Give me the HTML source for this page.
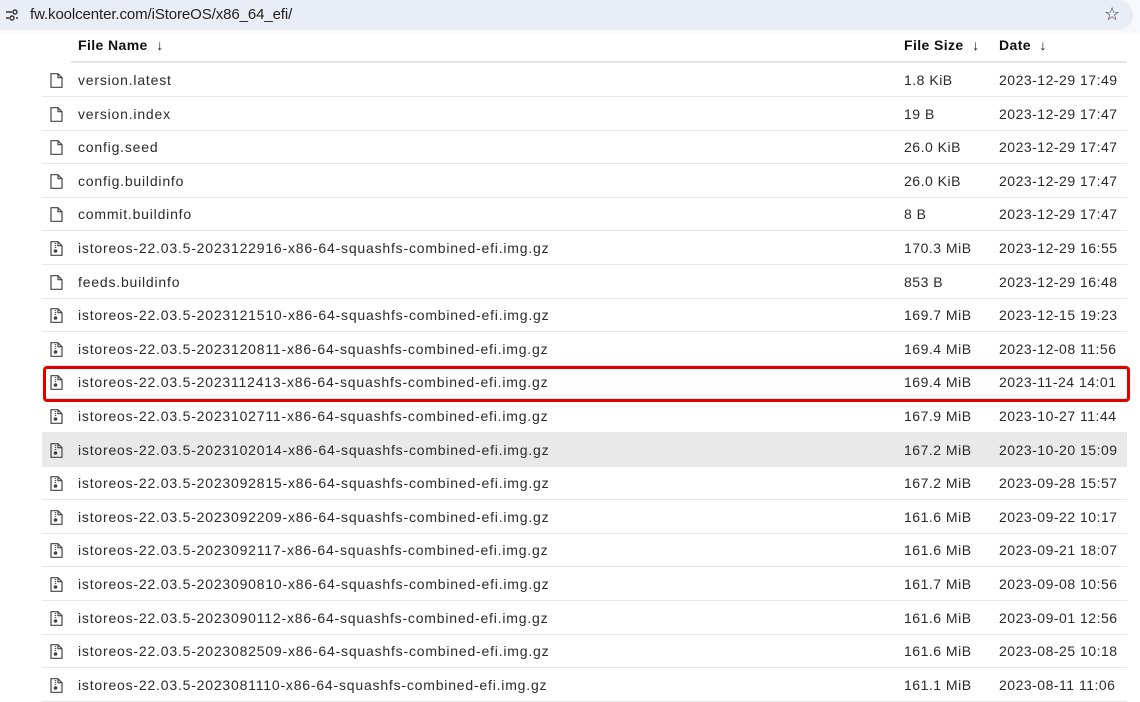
<!DOCTYPE html>
<html><head><meta charset="utf-8"><style>
*{margin:0;padding:0;box-sizing:border-box}
body{width:1140px;height:701px;overflow:hidden;background:#fff;font-family:"Liberation Sans",sans-serif;color:#222;position:relative}
.bar{position:absolute;left:0;top:0;width:1140px;height:33px;background:#f7f8fc}
.url{position:absolute;left:0;top:0;width:1133px;height:30px;background:#e9edf6;border-radius:0 15px 15px 0}
.url span{position:absolute;left:30px;top:6px;font-size:15px;color:#1f1f1f;letter-spacing:-.1px}
.star{position:absolute;left:1104px;top:4px;font-size:18px;color:#333}
.hdr{position:absolute;top:37px;font-size:14px;font-weight:bold;color:#111;letter-spacing:.4px}
.hline{position:absolute;left:71px;top:61px;width:1056px;height:2px;background:#e3e3e3}
.row{position:absolute;left:42px;width:1085px;height:34px;border-bottom:1px solid #e6e6e6;font-size:14px;letter-spacing:.5px;color:#2a2a2a}
.row span{position:absolute;top:9px}
.n{left:36px;letter-spacing:.8px}.s{left:862px}.d{left:957px}
.ic{position:absolute;left:8px;top:10px}
.hl{background:#e9e9e9}
.red{position:absolute;left:43px;top:366px;width:1087px;height:36px;border:3px solid #e00000;border-radius:4px}
</style></head><body>
<div class="bar"></div><div class="url"><svg style="position:absolute;left:5px;top:9px" width="14" height="12" viewBox="0 0 14 12"><path d="M1 3h6M1 9h3M11 9h2" stroke="#333" stroke-width="1.6"/><circle cx="10" cy="3" r="2" fill="none" stroke="#333" stroke-width="1.4"/><circle cx="7" cy="9" r="2" fill="none" stroke="#333" stroke-width="1.4"/></svg><span>fw.koolcenter.com/iStoreOS/x86_64_efi/</span></div>
<div class="star">☆</div>
<div class="hdr" style="left:78px">File Name &nbsp;↓</div>
<div class="hdr" style="left:904px">File Size &nbsp;↓</div>
<div class="hdr" style="left:999px">Date &nbsp;↓</div>
<div class="hline"></div>
<div id="rows"></div>
<script>
var f='<svg class="ic" width="13" height="15" viewBox="0 0 13 15"><path d="M1 .7h7l4 4v9.6H1z M8 .7v4h4" fill="none" stroke="#444" stroke-width="1.2"/></svg>';
var z='<svg class="ic" width="13" height="15" viewBox="0 0 13 15"><path d="M1 .7h7l4 4v9.6H1z M8 .7v4h4" fill="none" stroke="#444" stroke-width="1.2"/><path d="M5.5 2v6" stroke="#444" stroke-width="1.4" stroke-dasharray="1 1"/><circle cx="5.5" cy="10" r="1.8" fill="#444"/></svg>';
var p='istoreos-22.03.5-',q='-x86-64-squashfs-combined-efi.img.gz';
var d=[[f,'version.latest','1.8 KiB','2023-12-29 17:49'],[f,'version.index','19 B','2023-12-29 17:47'],[f,'config.seed','26.0 KiB','2023-12-29 17:47'],[f,'config.buildinfo','26.0 KiB','2023-12-29 17:47'],[f,'commit.buildinfo','8 B','2023-12-29 17:47'],[z,p+'2023122916'+q,'170.3 MiB','2023-12-29 16:55'],[f,'feeds.buildinfo','853 B','2023-12-29 16:48'],[z,p+'2023121510'+q,'169.7 MiB','2023-12-15 19:23'],[z,p+'2023120811'+q,'169.4 MiB','2023-12-08 11:56'],[z,p+'2023112413'+q,'169.4 MiB','2023-11-24 14:01'],[z,p+'2023102711'+q,'167.9 MiB','2023-10-27 11:44'],[z,p+'2023102014'+q,'167.2 MiB','2023-10-20 15:09'],[z,p+'2023092815'+q,'167.2 MiB','2023-09-28 15:57'],[z,p+'2023092209'+q,'161.6 MiB','2023-09-22 10:17'],[z,p+'2023092117'+q,'161.6 MiB','2023-09-21 18:07'],[z,p+'2023090810'+q,'161.7 MiB','2023-09-08 10:56'],[z,p+'2023090112'+q,'161.6 MiB','2023-09-01 12:56'],[z,p+'2023082509'+q,'161.6 MiB','2023-08-25 10:18'],[z,p+'2023081110'+q,'161.1 MiB','2023-08-11 11:06']];
var h='';d.forEach(function(r,i){h+='<div class="row'+(i==11?' hl':'')+'" style="top:'+(63+i*33.6)+'px">'+r[0]+'<span class="n">'+r[1]+'</span><span class="s">'+r[2]+'</span><span class="d">'+r[3]+'</span></div>';});
document.getElementById('rows').innerHTML=h;
</script>
<div class="red"></div>
</body></html>
